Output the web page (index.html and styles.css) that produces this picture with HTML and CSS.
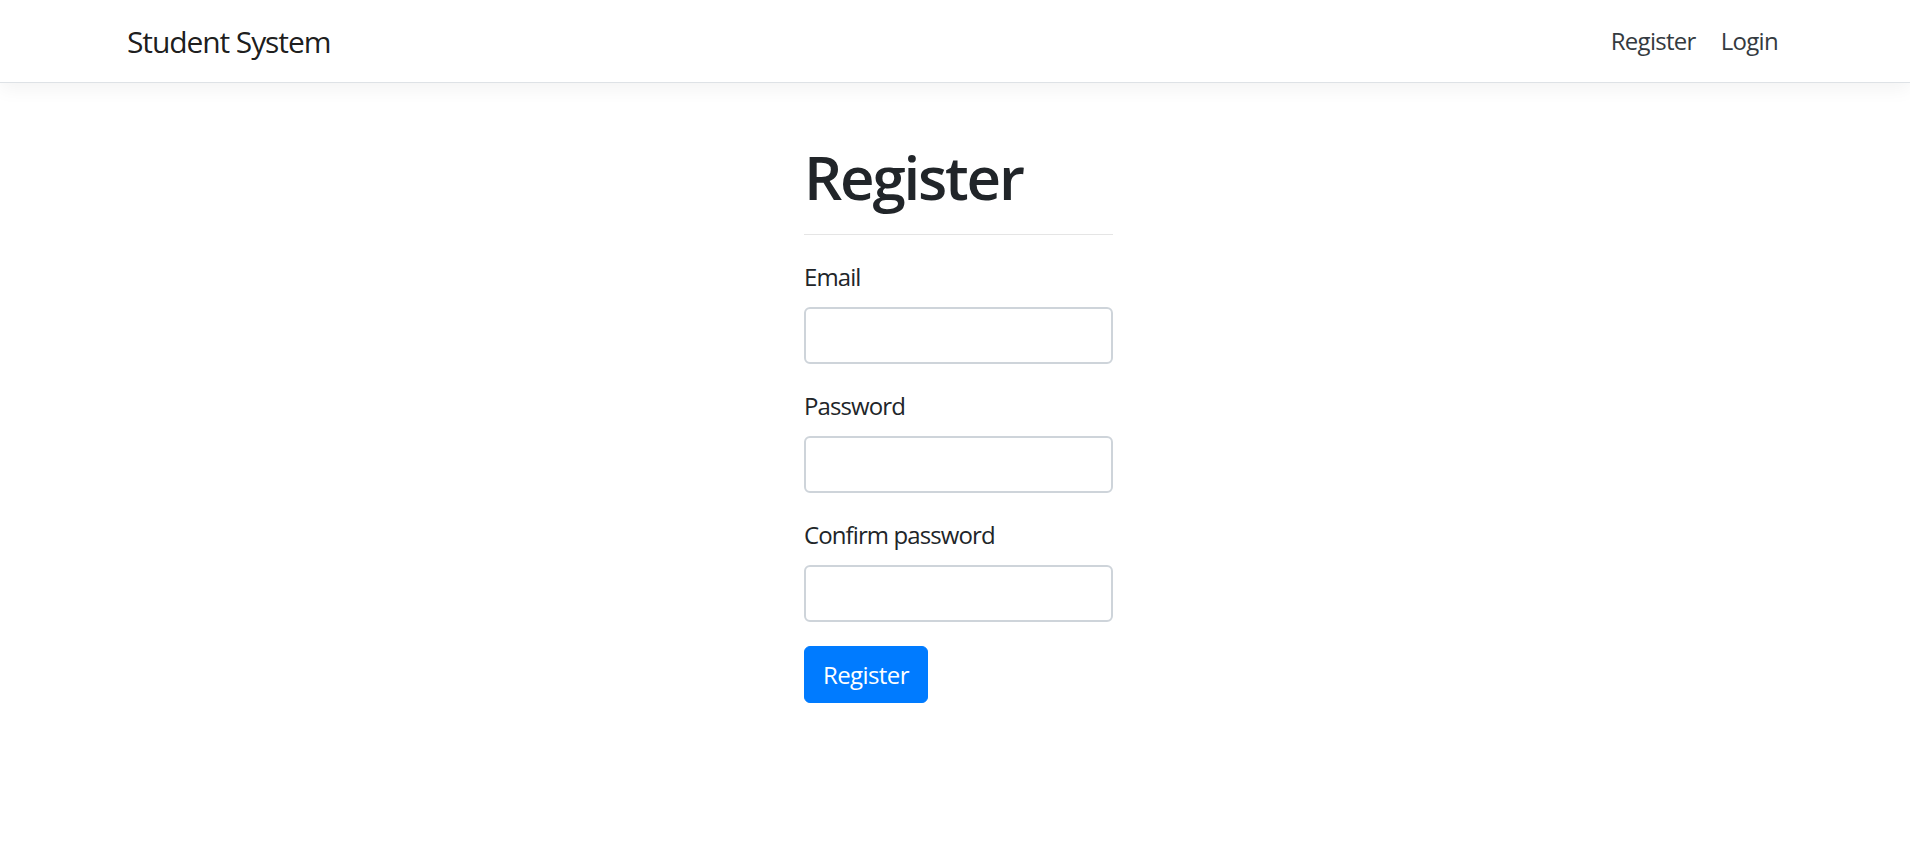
FILE: index.html
```html
<!DOCTYPE html>
<html lang="en">
<head>
<meta charset="utf-8">
<title>Register - Student System</title>
<link rel="stylesheet" href="styles.css">
</head>
<body>
<header class="navbar">
  <a class="brand" href="#">Student System</a>
  <nav class="nav">
    <a class="nav-link" href="#">Register</a>
    <a class="nav-link" href="#">Login</a>
  </nav>
</header>
<main class="main">
  <section class="form-col">
    <h1 class="title">Register</h1>
    <hr class="divider">
    <form class="form">
      <div class="form-group">
        <label class="label" for="email">Email</label>
        <input class="input" id="email" type="email">
      </div>
      <div class="form-group">
        <label class="label" for="password">Password</label>
        <input class="input" id="password" type="password">
      </div>
      <div class="form-group">
        <label class="label" for="confirm">Confirm password</label>
        <input class="input" id="confirm" type="password">
      </div>
      <button class="btn" type="submit">Register</button>
    </form>
  </section>
</main>
</body>
</html>
```

FILE: styles.css
```css
* { box-sizing: border-box; }
html, body { margin: 0; padding: 0; }
body {
  font-family: "Open Sans", "Noto Sans", sans-serif;
  color: #212529;
  background: #fff;
  font-size: 24px;
  line-height: 1.5;
}
a { text-decoration: none; }

.navbar {
  height: 83px;
  display: flex;
  align-items: center;
  justify-content: space-between;
  padding: 0 132px 0 127px;
  background: #fff;
  border-bottom: 1px solid #dee2e6;
  box-shadow: 0 6px 18px rgba(0, 0, 0, 0.05);
}
.brand {
  font-size: 30px;
  color: rgba(0, 0, 0, 0.9);
  letter-spacing: -1.1px;
}
.nav {
  display: flex;
  gap: 25px;
}
.nav-link {
  font-size: 24px;
  color: #343a40;
  letter-spacing: -0.7px;
}

.main {
  display: flex;
  justify-content: center;
  padding: 58px 0 0 7px;
}
.form-col {
  width: 309px;
}
.title {
  margin: 0;
  font-size: 60px;
  line-height: 72px;
  font-weight: 600;
  letter-spacing: -2.2px;
  color: #212529;
}
.divider {
  margin: 21px 0 24px;
  border: 0;
  border-top: 1px solid #e5e5e5;
}
.form-group {
  margin-bottom: 24px;
}
.label {
  display: block;
  margin-bottom: 12px;
  font-size: 24px;
  line-height: 36px;
  color: #212529;
  letter-spacing: -0.9px;
}
.input {
  display: block;
  width: 100%;
  height: 57px;
  border: 2px solid #ced4da;
  border-radius: 6px;
  background: #fff;
  font: inherit;
  padding: 9px 18px;
}
.btn {
  font: inherit;
  font-size: 24px;
  line-height: 36px;
  height: 57px;
  padding: 0 18px;
  color: #fff;
  background: #007bff;
  border: 1px solid #007bff;
  border-radius: 6px;
  letter-spacing: -0.6px;
}
```
